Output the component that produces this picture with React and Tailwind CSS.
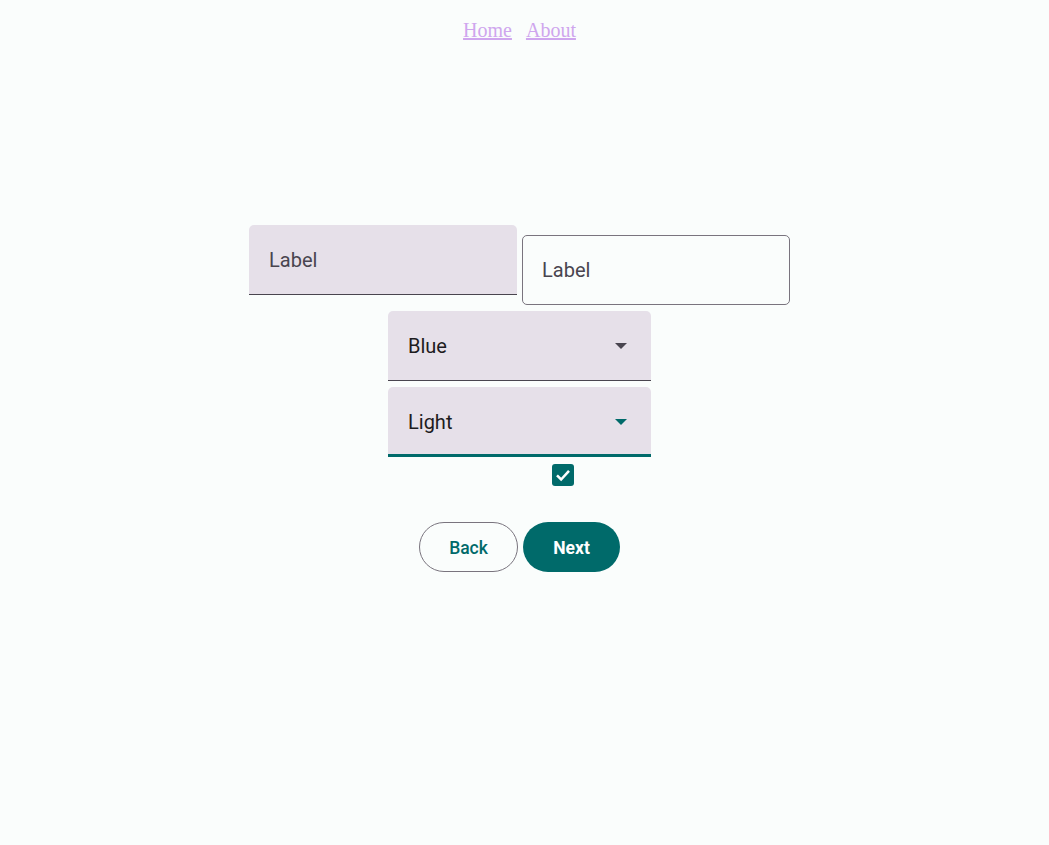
import React from "react";

function Arrow({ color }) {
  return (
    <svg width="12" height="6" viewBox="0 0 12 6" className="shrink-0">
      <path d="M0 0 L12 0 L6 6 Z" fill={color} />
    </svg>
  );
}

export default function App() {
  return (
    <div className="min-h-[845px] w-full bg-[#fafdfc] font-['Roboto',sans-serif]">
      <div className="w-[1039px] flex flex-col items-center">
        <nav className="pt-[19px] flex gap-[14px] font-['Liberation_Serif',serif] text-[20px] leading-[23px]">
          <a href="#" className="underline text-[#cfa6ee]">Home</a>
          <a href="#" className="underline text-[#cfa6ee]">About</a>
        </nav>

        <div className="mt-[183px] flex items-start gap-[5px]">
          <div className="w-[268px] h-[70px] rounded-t-[5px] bg-[#e6e0e9] border-b border-[#49454f] flex items-center pl-[20px] text-[20px] text-[#49454f]">
            Label
          </div>
          <div className="mt-[10px] w-[268px] h-[70px] rounded-[5px] border border-[#79747e] flex items-center pl-[19px] text-[20px] text-[#49454f]">
            Label
          </div>
        </div>

        <div className="mt-[6px] w-[263px] h-[70px] rounded-t-[5px] bg-[#e6e0e9] border-b border-[#49454f] flex items-center justify-between pl-[20px] pr-[24px] text-[20px] text-[#1d1b20]">
          <span>Blue</span>
          <Arrow color="#49454f" />
        </div>

        <div className="mt-[6px] w-[263px] h-[70px] rounded-t-[5px] bg-[#e6e0e9] border-b-[3px] border-[#006a6a] flex items-center justify-between pl-[20px] pr-[24px] pt-[2px] text-[20px] text-[#1d1b20]">
          <span>Light</span>
          <Arrow color="#006a6a" />
        </div>

        <div className="mt-[7px] w-[263px] pl-[164px]">
          <div className="w-[22px] h-[22px] rounded-[3px] bg-[#006a6a] flex items-center justify-center">
            <svg width="18" height="18" viewBox="0 0 24 24">
              <path d="M4 12.5 L9.5 18 L20 6.5" fill="none" stroke="#ffffff" strokeWidth="3.4" />
            </svg>
          </div>
        </div>

        <div className="mt-[36px] flex gap-[5px]">
          <button className="w-[99px] h-[50px] pt-[2px] rounded-full border border-[#79747e] text-[#006a6a] text-[17.5px] font-medium">
            Back
          </button>
          <button className="w-[97px] h-[50px] pt-[2px] rounded-full bg-[#006a6a] text-white text-[17.5px] font-bold">
            Next
          </button>
        </div>
      </div>
    </div>
  );
}
